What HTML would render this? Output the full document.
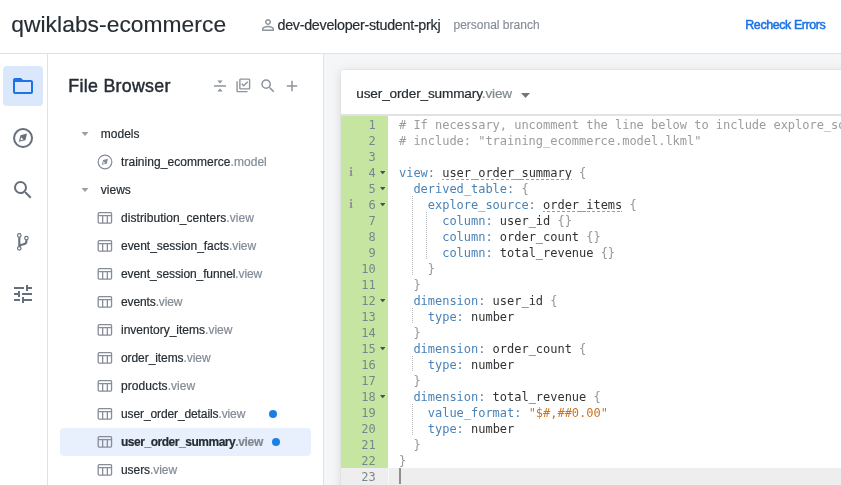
<!DOCTYPE html>
<html><head><meta charset="utf-8"><title>qwiklabs-ecommerce</title>
<style>
*{box-sizing:border-box;margin:0;padding:0}
html,body{width:841px;height:485px;overflow:hidden;background:#fff;font-family:"Liberation Sans",sans-serif;color:#262d33}
div,span,svg{position:absolute}
span{position:static}
#wrap{left:0;top:0;width:841px;height:485px;will-change:transform}
#hdr{left:0;top:0;width:841px;height:54px;border-bottom:1px solid #dfe2e6;background:#fff}
#title{-webkit-text-stroke:.15px;left:11.3px;top:9.5px;font-size:22.8px;line-height:28px;color:#262d33;white-space:nowrap;letter-spacing:.04px}
#branch{-webkit-text-stroke:.2px;left:277.5px;top:15.6px;font-size:14.3px;line-height:18px;color:#262d33;white-space:nowrap;letter-spacing:-.28px}
#pb{-webkit-text-stroke:.15px;left:453.5px;top:17px;font-size:12px;line-height:16px;color:#858d97;white-space:nowrap}
#recheck{left:745.3px;top:16.5px;font-size:12.4px;line-height:16px;color:#1a73e8;-webkit-text-stroke:.5px #1a73e8;white-space:nowrap;letter-spacing:-.38px}
#rail{left:0;top:54px;width:48px;height:431px;border-right:1px solid #dfe2e6;background:#fff}
#fbtn{left:3px;top:66px;width:40px;height:40px;border-radius:4px;background:#dbe8fc}
#panel{left:48px;top:54px;width:276px;height:431px;border-right:1px solid #dfe2e6;background:#fff}
#fbh{left:68.3px;top:73.55px;font-size:17.8px;line-height:24px;color:#262d33;white-space:nowrap;-webkit-text-stroke:.45px #262d33;letter-spacing:.3px}
#main{left:324px;top:54px;width:517px;height:431px;background:#f5f6f7}
#card{left:341px;top:70px;width:520px;height:430px;background:#fff;border-radius:2px 0 0 0;box-shadow:0 2px 11px rgba(60,64,67,.17),0 0 2px rgba(60,64,67,.14)}
#tab{-webkit-text-stroke:.2px;left:356.3px;top:86px;font-size:13.6px;line-height:16px;color:#262d33;white-space:nowrap;letter-spacing:-.15px}
#tab span{color:#7f8a8c}
#tabline{left:341px;top:114px;width:500px;height:2px;background:#e0e2e5}
#gutter{left:341px;top:116px;width:47px;height:352px;background:#c5e5a0}
#active{left:341px;top:468px;width:500px;height:17px;background:#eee}
#sep{left:388px;top:468px;width:1px;height:17px;background:#f8f8f8}
#cursor{left:399px;top:468px;width:2px;height:16px;background:#8e8e8e}
#hl{left:60px;top:428px;width:251px;height:28px;border-radius:4px;background:#e8f0fd}
.row{left:121px;-webkit-text-stroke:.2px;height:16px;font-size:12px;line-height:16px;color:#262d33;white-space:nowrap}
.row span{color:#838b96}
.fold{left:100.8px}
.b{font-weight:bold;letter-spacing:-.47px}
.b span{letter-spacing:-.35px;color:#828991}
.dot{width:8.6px;height:8.6px;border-radius:50%;background:#1a80e6}
.ln{left:341px;width:34.7px;height:16px;text-align:right;font:12px/16px "DejaVu Sans Mono","Liberation Mono",monospace;color:#77878f;letter-spacing:-.024px}
.cl{left:399px;height:16px;font:12px/16px "DejaVu Sans Mono","Liberation Mono",monospace;color:#333;white-space:pre;letter-spacing:-.024px}
.c{color:#9c9c9c}.k{color:#4a83b7}.s{color:#cb7420}.p{color:#959595}
.ul{height:1px;background:repeating-linear-gradient(90deg,#9c9c9c 0 3px,transparent 3px 5px) -1px 0}
.fa{width:0;height:0;border-left:2.7px solid transparent;border-right:2.7px solid transparent;border-top:3.4px solid #4e4e56}
.inf{left:347px;width:8px;height:16px;font:bold 13px/16px "Liberation Serif",serif;color:#958f9a;text-align:center}
.g{width:1px;height:16px;background:repeating-linear-gradient(to bottom,#b5b8bc 0 1px,transparent 1px 2px)}
</style></head><body><div id="wrap">
<div id="hdr"></div>
<div id="title">qwiklabs-ecommerce</div>
<svg style="left:259px;top:16px" width="18" height="18" viewBox="0 0 24 24" fill="#8e949b"><path d="M12 5.9a2.1 2.1 0 1 1 0 4.2 2.1 2.1 0 0 1 0-4.2m0 9c2.97 0 6.1 1.46 6.1 2.1v1.1H5.9V17c0-.64 3.13-2.1 6.1-2.1M12 4C9.79 4 8 5.79 8 8s1.790 4 4 4 4-1.790 4-4-1.790-4-4-4zm0 9c-2.67 0-8 1.34-8 4v3h16v-3c0-2.660-5.330-4-8-4z"/></svg>
<div id="branch">dev-developer-student-prkj</div>
<div id="pb">personal branch</div>
<div id="recheck">Recheck Errors</div>
<div id="rail"></div><div id="fbtn"></div>
<svg style="left:11px;top:74px" width="24" height="24" viewBox="0 0 24 24" fill="#1a73e8"><path d="M20 6h-8l-2-2H4c-1.100 0-1.990.9-1.990 2L2 18c0 1.100.9 2 2 2h16c1.100 0 2-.9 2-2V8c0-1.100-.9-2-2-2zm0 12H4V8h16v10z"/></svg>
<svg style="left:11px;top:126px" width="24" height="24" viewBox="0 0 24 24"><circle cx="12.050" cy="12.050" r="9" fill="none" stroke="#66707d" stroke-width="2"/><path d="M16 7.600L14.400 14.200 7.800 15.700 9.500 9.200z" fill="#66707d"/><path d="M10.100 11.200L12.500 13.600 9.400 14.400z" fill="#fff"/></svg>
<svg style="left:11px;top:178px" width="24" height="24" viewBox="0 0 24 24" fill="#66707d"><path d="M15.500 14h-.79l-.28-.27A6.471 6.471 0 0 0 16 9.500 6.500 6.500 0 1 0 9.500 16c1.610 0 3.090-.59 4.230-1.570l.27.28v.79l5 4.990L20.490 19l-4.990-5zm-6 0C7.010 14 5 11.990 5 9.500S7.010 5 9.500 5 14 7.010 14 9.500 11.990 14 9.500 14z"/></svg>
<svg id="git" style="left:11px;top:230px" width="24" height="24" viewBox="0 0 24 24" fill="none" stroke="#66707d"><g stroke-width="1.150"><circle cx="8.300" cy="5.400" r="1.750"/><circle cx="8.300" cy="18.300" r="1.750"/><circle cx="15.400" cy="8.100" r="1.750"/></g><path stroke-width="2.100" d="M8.300 7.300V16.500M15.400 10V11.800C15.400 14 13.500 14.200 11.500 14.500 9.800 14.800 8.600 15.300 8.300 16.500"/></svg>
<svg id="tune" style="left:11px;top:282px" width="24" height="24" viewBox="0 0 24 24" fill="#66707d"><path d="M3 17v2h6v-2H3zM3 5v2h10V5H3zm10 16v-2h8v-2h-8v-2h-2v6h2zM7 9v2H3v2h4v2h2V9H7zm14 4v-2H11v2h10zm-6-4h2V7h4V5h-4V3h-2v6z"/></svg>
<div id="panel"></div>
<div id="fbh">File Browser</div>
<svg style="left:211px;top:77px" width="18" height="18" viewBox="0 0 18 18" fill="#8e949b"><rect x="3" y="8.200" width="12" height="1.500"/><path d="M6.300 3.600h5.400L9 6.500zM6.300 14.400h5.400L9 11.500z"/></svg>
<svg style="left:235.200px;top:76.900px" width="16.700" height="16.700" viewBox="0 0 24 24" fill="#8e949b"><path d="M20 4v12H8V4h12m0-2H8c-1.100 0-2 .9-2 2v12c0 1.100.9 2 2 2h12c1.100 0 2-.9 2-2V4c0-1.100-.9-2-2-2zm-7.530 12L9 10.500l1.400-1.410 2.070 2.080L17.600 6 19 7.410 12.470 14zM4 6H2v14c0 1.100.9 2 2 2h14v-2H4V6z"/></svg>
<svg style="left:259px;top:77px" width="18" height="18" viewBox="0 0 24 24" fill="#8e949b"><path d="M15.500 14h-.79l-.28-.27A6.471 6.471 0 0 0 16 9.500 6.500 6.500 0 1 0 9.500 16c1.610 0 3.090-.59 4.230-1.570l.27.28v.79l5 4.990L20.490 19l-4.990-5zm-6 0C7.010 14 5 11.990 5 9.500S7.010 5 9.500 5 14 7.010 14 9.500 11.990 14 9.500 14z"/></svg>
<svg style="left:283px;top:77px" width="18" height="18" viewBox="0 0 24 24" fill="#8e949b"><path d="M19 13h-6v6h-2v-6H5v-2h6V5h2v6h6v2z"/></svg>
<div id="hl"></div>
<svg style="left:81px;top:132px" width="8" height="4" viewBox="0 0 8 4" fill="#9aa0a6"><path d="M0.500 0h7L4 4z"/></svg>
<div class="row fold" style="top:126px">models</div>
<svg style="left:96.100px;top:153.3px" width="18" height="18" viewBox="0 0 24 24"><circle cx="12" cy="12" r="9.100" fill="none" stroke="#868d98" stroke-width="1.650"/><path d="M16 7.600L14.400 14.200 7.800 15.700 9.500 9.200z" fill="#868d98"/><path d="M10.100 11.200L12.500 13.600 9.400 14.400z" fill="#fff"/></svg>
<div class="row" style="top:154px;letter-spacing:0.045px">training_ecommerce<span>.model</span></div>
<svg style="left:81px;top:188px" width="8" height="4" viewBox="0 0 8 4" fill="#9aa0a6"><path d="M0.500 0h7L4 4z"/></svg>
<div class="row fold" style="top:182px">views</div>
<svg style="left:97px;top:211px" width="16" height="13" viewBox="0 0 16 13" fill="none" stroke="#868d98" stroke-width="1.300"><rect x="1.200" y="1.550" width="13.350" height="10.500" rx="1"/><path d="M1.200 4.550h13.350M5.650 4.550v7.500M10.350 4.550v7.500"/></svg>
<div class="row" style="top:210px;letter-spacing:0.06px">distribution_centers<span>.view</span></div>
<svg style="left:97px;top:239px" width="16" height="13" viewBox="0 0 16 13" fill="none" stroke="#868d98" stroke-width="1.300"><rect x="1.200" y="1.550" width="13.350" height="10.500" rx="1"/><path d="M1.200 4.550h13.350M5.650 4.550v7.500M10.350 4.550v7.500"/></svg>
<div class="row" style="top:238px;letter-spacing:-0.045px">event_session_facts<span>.view</span></div>
<svg style="left:97px;top:267px" width="16" height="13" viewBox="0 0 16 13" fill="none" stroke="#868d98" stroke-width="1.300"><rect x="1.200" y="1.550" width="13.350" height="10.500" rx="1"/><path d="M1.200 4.550h13.350M5.650 4.550v7.500M10.350 4.550v7.500"/></svg>
<div class="row" style="top:266px;letter-spacing:-0.09px">event_session_funnel<span>.view</span></div>
<svg style="left:97px;top:295px" width="16" height="13" viewBox="0 0 16 13" fill="none" stroke="#868d98" stroke-width="1.300"><rect x="1.200" y="1.550" width="13.350" height="10.500" rx="1"/><path d="M1.200 4.550h13.350M5.650 4.550v7.500M10.350 4.550v7.500"/></svg>
<div class="row" style="top:294px;letter-spacing:-0.12px">events<span>.view</span></div>
<svg style="left:97px;top:323px" width="16" height="13" viewBox="0 0 16 13" fill="none" stroke="#868d98" stroke-width="1.300"><rect x="1.200" y="1.550" width="13.350" height="10.500" rx="1"/><path d="M1.200 4.550h13.350M5.650 4.550v7.500M10.350 4.550v7.500"/></svg>
<div class="row" style="top:322px">inventory_items<span>.view</span></div>
<svg style="left:97px;top:351px" width="16" height="13" viewBox="0 0 16 13" fill="none" stroke="#868d98" stroke-width="1.300"><rect x="1.200" y="1.550" width="13.350" height="10.500" rx="1"/><path d="M1.200 4.550h13.350M5.650 4.550v7.500M10.350 4.550v7.500"/></svg>
<div class="row" style="top:350px;letter-spacing:-0.075px">order_items<span>.view</span></div>
<svg style="left:97px;top:379px" width="16" height="13" viewBox="0 0 16 13" fill="none" stroke="#868d98" stroke-width="1.300"><rect x="1.200" y="1.550" width="13.350" height="10.500" rx="1"/><path d="M1.200 4.550h13.350M5.650 4.550v7.500M10.350 4.550v7.500"/></svg>
<div class="row" style="top:378px;letter-spacing:0.075px">products<span>.view</span></div>
<svg style="left:97px;top:407px" width="16" height="13" viewBox="0 0 16 13" fill="none" stroke="#868d98" stroke-width="1.300"><rect x="1.200" y="1.550" width="13.350" height="10.500" rx="1"/><path d="M1.200 4.550h13.350M5.650 4.550v7.500M10.350 4.550v7.500"/></svg>
<div class="row" style="top:406px;letter-spacing:-0.11px">user_order_details<span>.view</span></div>
<svg style="left:97px;top:435px" width="16" height="13" viewBox="0 0 16 13" fill="none" stroke="#868d98" stroke-width="1.300"><rect x="1.200" y="1.550" width="13.350" height="10.500" rx="1"/><path d="M1.200 4.550h13.350M5.650 4.550v7.500M10.350 4.550v7.500"/></svg>
<div class="row b" style="top:434px">user_order_summary<span>.view</span></div>
<svg style="left:97px;top:463px" width="16" height="13" viewBox="0 0 16 13" fill="none" stroke="#868d98" stroke-width="1.300"><rect x="1.200" y="1.550" width="13.350" height="10.500" rx="1"/><path d="M1.200 4.550h13.350M5.650 4.550v7.500M10.350 4.550v7.500"/></svg>
<div class="row" style="top:462px;letter-spacing:-0.06px">users<span>.view</span></div>
<div class="dot" style="left:268.8px;top:409.7px"></div>
<div class="dot" style="left:271.6px;top:437.8px"></div>
<div id="main"></div><div id="card"></div>
<div id="tab">user_order_summary<span>.view</span></div>
<svg style="left:521px;top:93px" width="9" height="5" viewBox="0 0 9 5" fill="#7a7572"><path d="M0 0h9L4.500 5z"/></svg>
<div id="tabline"></div><div id="gutter"></div><div id="active"></div><div id="sep"></div><div id="cursor"></div>
<div class="ln" style="top:117.3px">1</div>
<div class="cl" style="top:117.3px"><span class="c"># If necessary, uncomment the line below to include explore_source.</span></div>
<div class="ln" style="top:133.3px">2</div>
<div class="cl" style="top:133.3px"><span class="c"># include: "training_ecommerce.model.lkml"</span></div>
<div class="ln" style="top:149.3px">3</div>
<div class="ln" style="top:165.3px">4</div>
<svg style="left:379.700px;top:171.1px" width="5.400" height="3.400" viewBox="0 0 5.400 3.400" fill="#4e4e56"><path d="M0 0h5.400L2.700 3.400z"/></svg>
<div class="inf" style="top:163.5px">i</div>
<div class="cl" style="top:165.3px"><span class="k">view:</span> <span>user_order_summary</span> <span class="p">{</span></div>
<div class="ln" style="top:181.3px">5</div>
<svg style="left:379.700px;top:187.1px" width="5.400" height="3.400" viewBox="0 0 5.400 3.400" fill="#4e4e56"><path d="M0 0h5.400L2.700 3.400z"/></svg>
<div class="cl" style="top:181.3px">  <span class="k">derived_table:</span> <span class="p">{</span></div>
<div class="ln" style="top:197.3px">6</div>
<svg style="left:379.700px;top:203.1px" width="5.400" height="3.400" viewBox="0 0 5.400 3.400" fill="#4e4e56"><path d="M0 0h5.400L2.700 3.400z"/></svg>
<div class="inf" style="top:195.5px">i</div>
<div class="g" style="left:412.0px;top:196px"></div>
<div class="cl" style="top:197.3px">    <span class="k">explore_source:</span> <span>order_items</span> <span class="p">{</span></div>
<div class="ln" style="top:213.3px">7</div>
<div class="g" style="left:412.0px;top:212px"></div>
<div class="g" style="left:426.4px;top:212px"></div>
<div class="cl" style="top:213.3px">      <span class="k">column:</span> user_id <span class="p">{}</span></div>
<div class="ln" style="top:229.3px">8</div>
<div class="g" style="left:412.0px;top:228px"></div>
<div class="g" style="left:426.4px;top:228px"></div>
<div class="cl" style="top:229.3px">      <span class="k">column:</span> order_count <span class="p">{}</span></div>
<div class="ln" style="top:245.3px">9</div>
<div class="g" style="left:412.0px;top:244px"></div>
<div class="g" style="left:426.4px;top:244px"></div>
<div class="cl" style="top:245.3px">      <span class="k">column:</span> total_revenue <span class="p">{}</span></div>
<div class="ln" style="top:261.3px">10</div>
<div class="g" style="left:412.0px;top:260px"></div>
<div class="cl" style="top:261.3px">    <span class="p">}</span></div>
<div class="ln" style="top:277.3px">11</div>
<div class="cl" style="top:277.3px">  <span class="p">}</span></div>
<div class="ln" style="top:293.3px">12</div>
<svg style="left:379.700px;top:299.1px" width="5.400" height="3.400" viewBox="0 0 5.400 3.400" fill="#4e4e56"><path d="M0 0h5.400L2.700 3.400z"/></svg>
<div class="cl" style="top:293.3px">  <span class="k">dimension:</span> user_id <span class="p">{</span></div>
<div class="ln" style="top:309.3px">13</div>
<div class="g" style="left:412.0px;top:308px"></div>
<div class="cl" style="top:309.3px">    <span class="k">type:</span> number</div>
<div class="ln" style="top:325.3px">14</div>
<div class="cl" style="top:325.3px">  <span class="p">}</span></div>
<div class="ln" style="top:341.3px">15</div>
<svg style="left:379.700px;top:347.1px" width="5.400" height="3.400" viewBox="0 0 5.400 3.400" fill="#4e4e56"><path d="M0 0h5.400L2.700 3.400z"/></svg>
<div class="cl" style="top:341.3px">  <span class="k">dimension:</span> order_count <span class="p">{</span></div>
<div class="ln" style="top:357.3px">16</div>
<div class="g" style="left:412.0px;top:356px"></div>
<div class="cl" style="top:357.3px">    <span class="k">type:</span> number</div>
<div class="ln" style="top:373.3px">17</div>
<div class="cl" style="top:373.3px">  <span class="p">}</span></div>
<div class="ln" style="top:389.3px">18</div>
<svg style="left:379.700px;top:395.1px" width="5.400" height="3.400" viewBox="0 0 5.400 3.400" fill="#4e4e56"><path d="M0 0h5.400L2.700 3.400z"/></svg>
<div class="cl" style="top:389.3px">  <span class="k">dimension:</span> total_revenue <span class="p">{</span></div>
<div class="ln" style="top:405.3px">19</div>
<div class="g" style="left:412.0px;top:404px"></div>
<div class="cl" style="top:405.3px">    <span class="k">value_format:</span> <span class="s">"$#,##0.00"</span></div>
<div class="ln" style="top:421.3px">20</div>
<div class="g" style="left:412.0px;top:420px"></div>
<div class="cl" style="top:421.3px">    <span class="k">type:</span> number</div>
<div class="ln" style="top:437.3px">21</div>
<div class="cl" style="top:437.3px">  <span class="p">}</span></div>
<div class="ln" style="top:453.3px">22</div>
<div class="cl" style="top:453.3px"><span class="p">}</span></div>
<div class="ln" style="top:469.3px">23</div>
<div class="ul" style="left:442.200px;top:179px;width:129.600px"></div>
<div class="ul" style="left:543px;top:211px;width:79.200px"></div>
</div></body></html>
